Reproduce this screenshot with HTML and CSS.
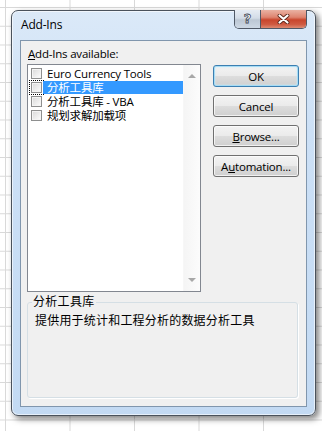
FILE: index.html
```html
<!DOCTYPE html>
<html lang="zh-CN">
<head>
    <meta charset="UTF-8">
    <title>Add-Ins</title>
    <link rel="stylesheet" href="styles.css">
</head>
<body>
    <div class="window">
        <div class="titlebar">
            <span class="title">Add-Ins</span>
            <div class="caption-buttons">
                <span class="cap-btn help">?</span>
                <span class="cap-btn close">
                    <svg width="13" height="10" viewBox="0 0 13 10">
                        <path d="M2.5 1.5 L10.5 8.5 M10.5 1.5 L2.5 8.5" stroke="#5a2418" stroke-width="3.8" stroke-linecap="round"/>
                        <path d="M2.5 1.5 L10.5 8.5 M10.5 1.5 L2.5 8.5" stroke="#ffffff" stroke-width="2.2" stroke-linecap="round"/>
                    </svg>
                </span>
            </div>
        </div>

        <div class="client">
            <div class="top">
                <div class="list-col">
                    <div class="label"><u>A</u>dd-Ins available:</div>
                    <div class="listbox">
                        <ul class="items">
                            <li><span class="check"></span><span class="text">Euro Currency Tools</span></li>
                            <li class="selected"><span class="check focus"></span><span class="text">分析工具库</span></li>
                            <li><span class="check"></span><span class="text">分析工具库 - VBA</span></li>
                            <li><span class="check"></span><span class="text">规划求解加载项</span></li>
                        </ul>
                        <div class="scrollbar">
                            <span class="arrow up"></span>
                            <span class="arrow down"></span>
                        </div>
                    </div>
                </div>
                <div class="buttons">
                    <button class="btn default">OK</button>
                    <button class="btn">Cancel</button>
                    <button class="btn"><u>B</u>rowse...</button>
                    <button class="btn">A<u>u</u>tomation...</button>
                </div>
            </div>

            <fieldset class="desc">
                <legend>分析工具库</legend>
                <p>提供用于统计和工程分析的数据分析工具</p>
            </fieldset>
        </div>
    </div>
</body>
</html>
```

FILE: styles.css
```css
:root {
    --ui-font: "Open Sans", "Noto Sans CJK SC", sans-serif;
    --face: #f0f0f0;
    --grid: #d9d9d9;
}

* {
    box-sizing: border-box;
}

body {
    margin: 0;
    width: 322px;
    height: 431px;
    overflow: hidden;
    font-family: var(--ui-font);
    font-size: 11.5px;
    letter-spacing: -0.2px;
    color: #000;
    background-color: #fff;
    background-image:
        linear-gradient(to right, var(--grid) 1px, transparent 1px),
        linear-gradient(to bottom, var(--grid) 1px, transparent 1px);
    background-size: 64.5px 100%, 100% 18.75px;
    background-position: 5px 0, 0 7px;
    padding-top: 10px;
    padding-left: 11px;
}

/* window frame */
.window {
    width: 305px;
    height: 406px;
    border: 1px solid #4a525c;
    border-radius: 7px;
    background: linear-gradient(to bottom, #dbe9f8 0%, #cce0f6 30%, #c3daf3 100%);
    box-shadow: inset 0 0 0 1px rgba(255, 255, 255, 0.6), 3px 3px 6px rgba(0, 0, 0, 0.5);
    padding: 0 8px 8px 8px;
    display: flex;
    flex-direction: column;
}

.titlebar {
    height: 29px;
    display: flex;
    justify-content: space-between;
    align-items: flex-start;
}

.title {
    font-size: 12px;
    line-height: 14px;
    margin-top: 7px;
    margin-left: 1px;
}

.caption-buttons {
    display: flex;
    margin-top: -1px;
    height: 19px;
    border: 1px solid #4f5866;
    border-top: none;
    border-radius: 0 0 5px 5px;
    overflow: hidden;
}

.cap-btn {
    display: flex;
    align-items: center;
    justify-content: center;
    height: 100%;
}

.help {
    width: 26px;
    border-right: 1px solid #4f5866;
    background: linear-gradient(to bottom, #e6ecf3 0%, #d3dce7 45%, #bcc7d4 55%, #cdd8e4 100%);
    font-family: "DejaVu Sans", sans-serif;
    font-weight: bold;
    font-size: 13px;
    color: #fff;
    -webkit-text-stroke: 0.8px #3d4654;
    padding-bottom: 1px;
}

.close {
    width: 45px;
    background: linear-gradient(to bottom, #eab2a3 0%, #de8470 40%, #c9462d 55%, #cf5a41 80%, #dd8a72 100%);
}

/* client area */
.client {
    flex: 1;
    border: 1px solid #8096ad;
    background: var(--face);
    padding: 6px 0 0 6px;
}

.top {
    display: flex;
}

.list-col {
    width: 174px;
}

.label {
    line-height: 14px;
    margin-bottom: 3px;
    padding-left: 1px;
}

.listbox {
    height: 228px;
    border: 1px solid #828790;
    background: #fff;
    display: flex;
}

.items {
    flex: 1;
    list-style: none;
    margin: 0;
    padding: 1px 0 0 0;
}

.items li {
    height: 14px;
    display: flex;
    align-items: center;
}

.check {
    width: 11px;
    height: 11px;
    margin-left: 3px;
    margin-right: 1px;
    border: 1px solid #8e8f8f;
    background: linear-gradient(135deg, #d8d8d8 0%, #f2f2f2 70%, #fff 100%);
    box-shadow: inset 0 0 0 1px #f4f4f4;
}

.check.focus {
    outline: 1px dotted #000;
    outline-offset: 1px;
}

.text {
    flex: 1;
    height: 13px;
    line-height: 13px;
    padding-left: 4px;
    white-space: nowrap;
}

.selected .text {
    background: #3399ff;
    color: #fff;
}

.scrollbar {
    width: 17px;
    background: linear-gradient(to right, #f5f5f5, #fcfcfc);
    border-left: 1px solid #f7f7f7;
    display: flex;
    flex-direction: column;
    justify-content: space-between;
    align-items: center;
    padding: 9px 0 9px 0;
}

.arrow {
    width: 0;
    height: 0;
    border-left: 4px solid transparent;
    border-right: 4px solid transparent;
}

.arrow.up {
    border-bottom: 4px solid #a8a8a8;
}

.arrow.down {
    border-top: 4px solid #a8a8a8;
}

/* push buttons */
.buttons {
    width: 86px;
    margin-left: 12px;
    padding-top: 18px;
    display: flex;
    flex-direction: column;
    gap: 8px;
}

.btn {
    height: 22px;
    border: 1px solid #707070;
    border-radius: 3px;
    background: linear-gradient(to bottom, #f3f3f3 0%, #ebebeb 48%, #dddddd 52%, #cfcfcf 100%);
    box-shadow: inset 0 0 0 1px rgba(255, 255, 255, 0.7);
    font-family: var(--ui-font);
    font-size: 11.5px;
    letter-spacing: -0.2px;
    color: #000;
    padding: 0;
}

.btn.default {
    border-color: #3c7fb1;
    box-shadow: inset 0 0 0 1px #a6dcf5, inset 0 0 2px 1px #c9ecfb;
}

/* description group box */
.desc {
    width: 271px;
    height: 103px;
    margin: 3px 0 0 0;
    padding: 0 0 0 4px;
    border: 1px solid #d5dfe5;
    border-radius: 3px;
    box-shadow: 1px 1px 0 #fff;
}

.desc legend {
    padding: 0 1px;
    font-size: 12px;
    line-height: 14px;
    letter-spacing: 0.3px;
}

.desc p {
    margin: 5px 0 0 3px;
    font-size: 12px;
    line-height: 14px;
    letter-spacing: 0.2px;
}
```
